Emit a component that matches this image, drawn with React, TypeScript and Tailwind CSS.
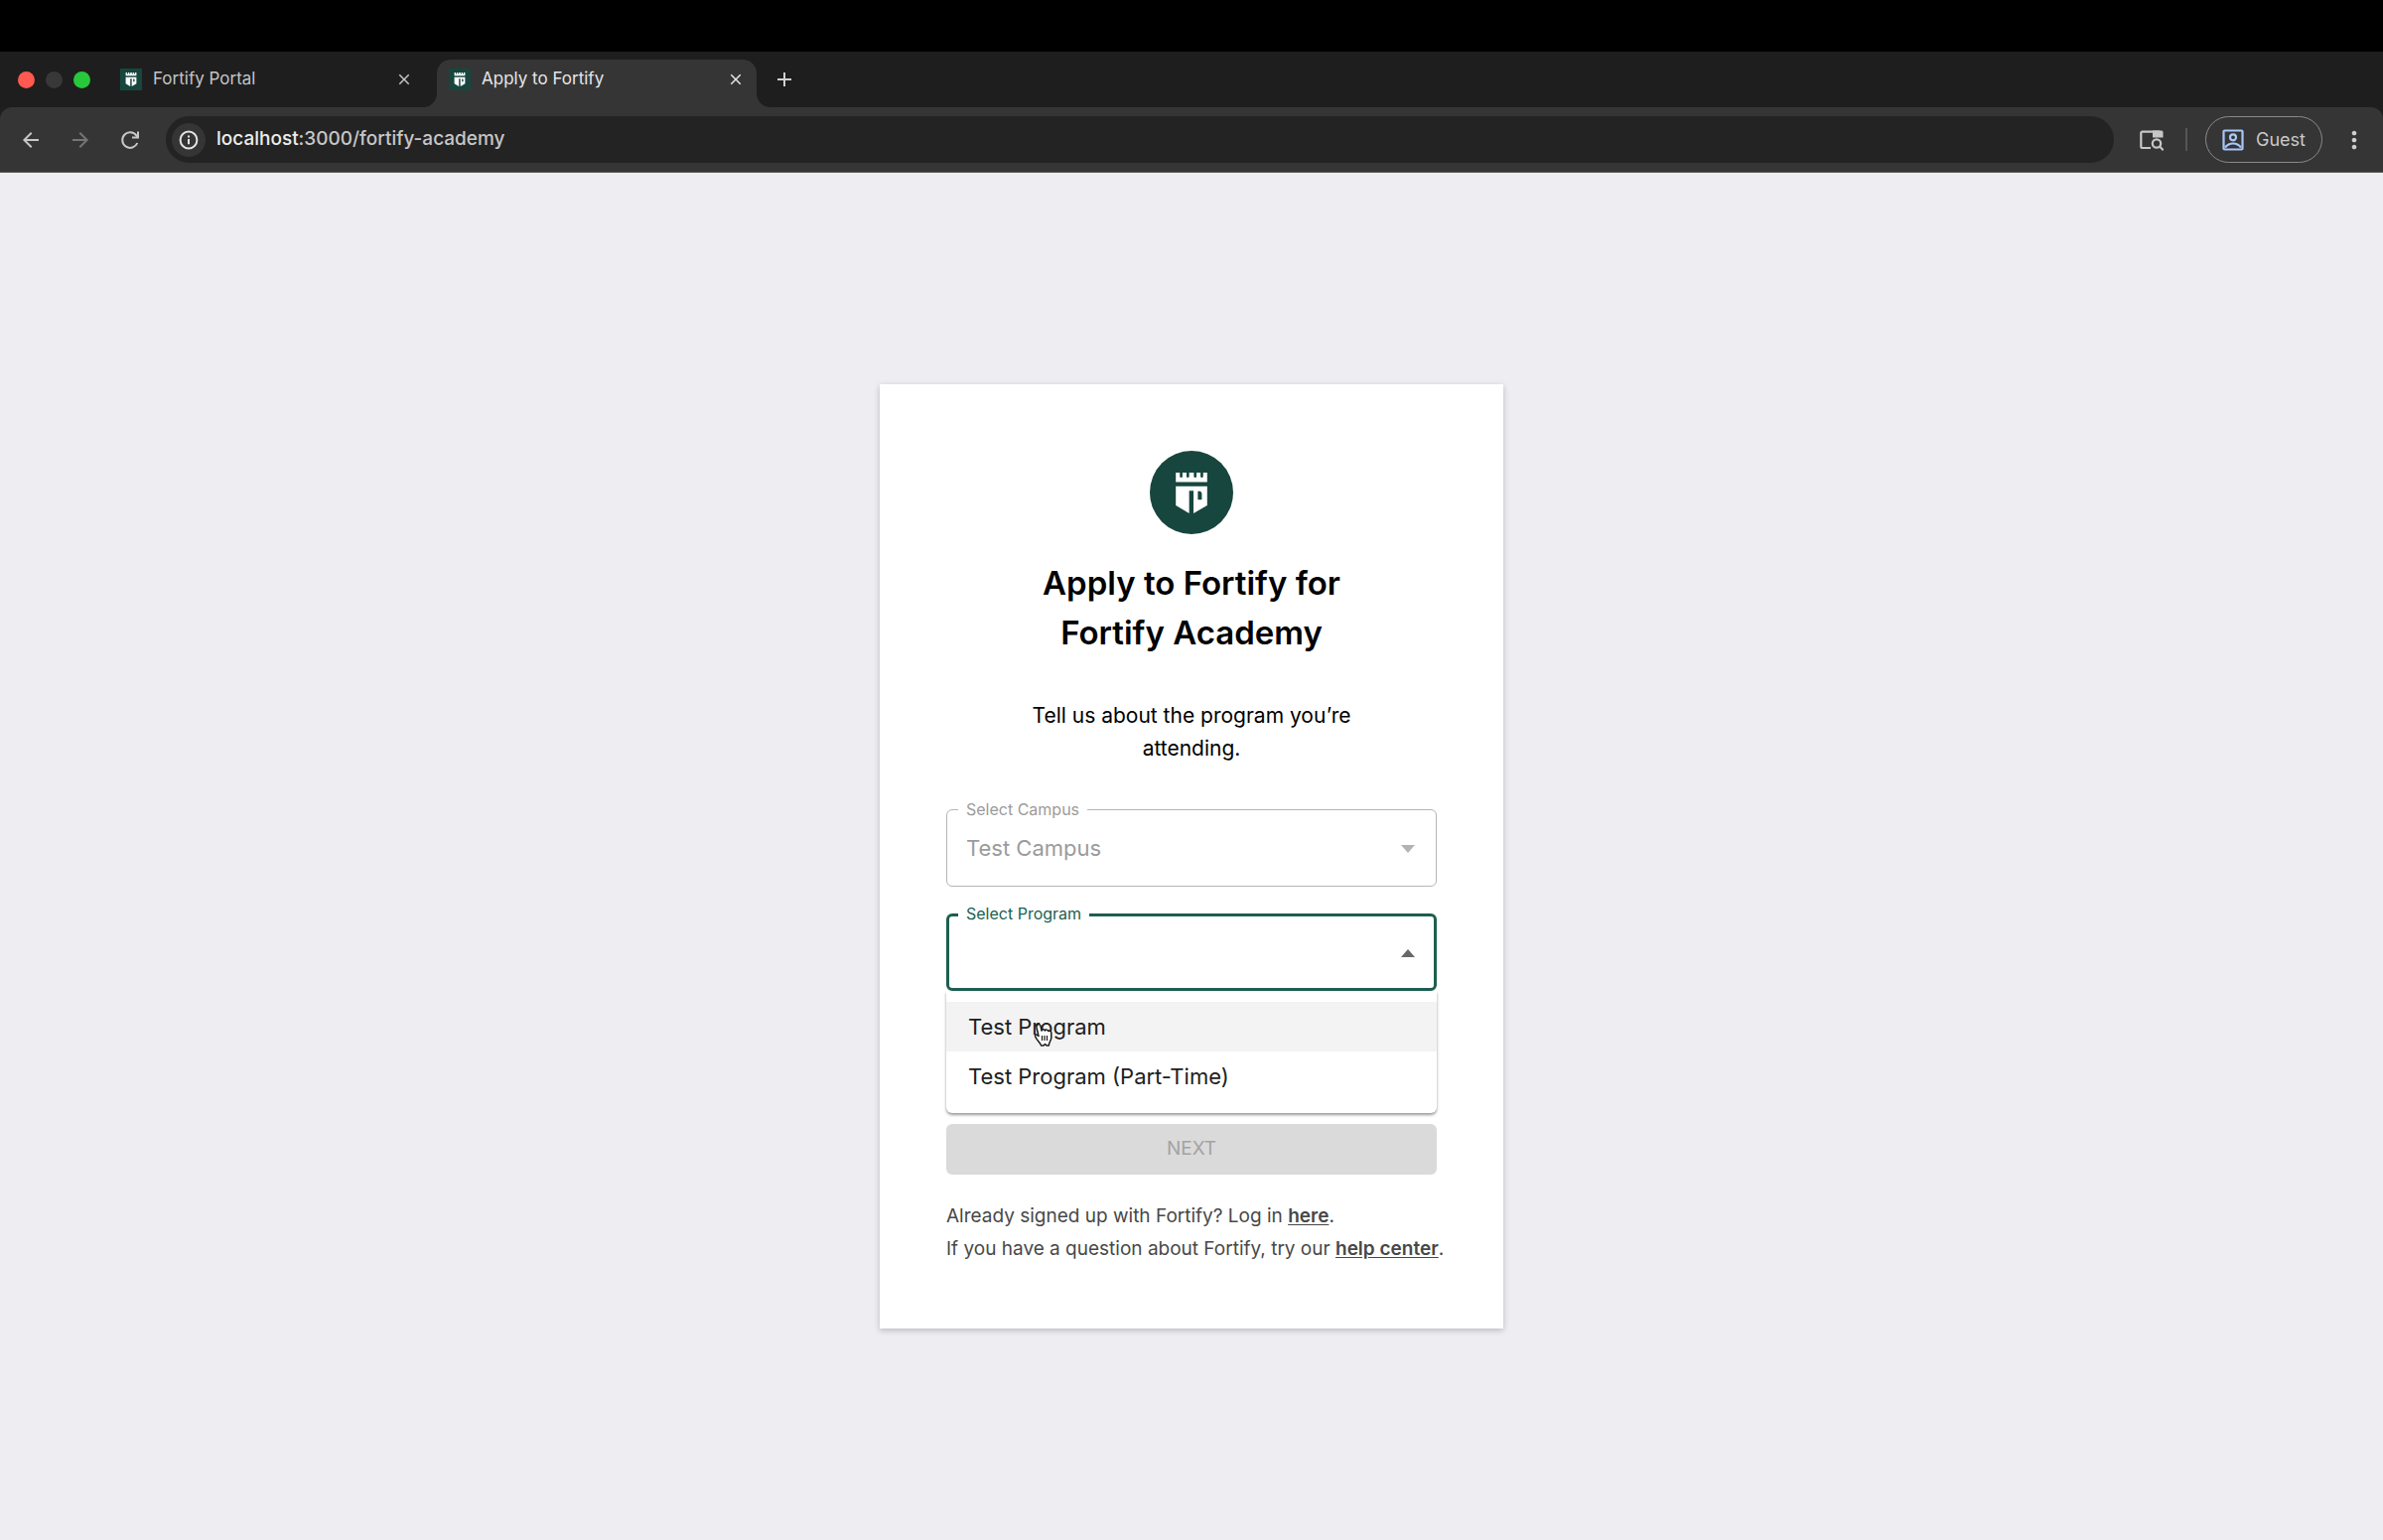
import { useState } from "react";
import { MdAdd, MdArrowBack, MdArrowForward, MdClose, MdMoreVert } from "react-icons/md";
import { clsx } from "clsx";

const tabs = [
  { title: "Fortify Portal", active: false },
  { title: "Apply to Fortify", active: true }
];

const programs = ["Test Program", "Test Program (Part-Time)"];

export default function App() {
  return (
    <div className="flex min-h-screen flex-col bg-[#eeeef2] font-['Inter','Liberation_Sans',sans-serif]">
      <div className="h-[52px] bg-black" />
      <TabStrip />
      <Toolbar />
      <main className="flex flex-1 items-center justify-center">
        <ApplyCard />
      </main>
    </div>
  );
}

function TabStrip() {
  return (
    <header className="flex h-14 items-stretch bg-[#1e1e1e]">
      <div className="flex items-center gap-[11px] px-[18px]">
        <span className="h-[17px] w-[17px] rounded-full bg-[#ff5950]" />
        <span className="h-[17px] w-[17px] rounded-full bg-[#383838]" />
        <span className="h-[17px] w-[17px] rounded-full bg-[#28c83c]" />
      </div>
      <nav className="flex items-end" aria-label="Tabs">
        {tabs.map((tab) => (
          <Tab key={tab.title} title={tab.title} active={tab.active} />
        ))}
      </nav>
      <button type="button" aria-label="New tab" className="ml-4 text-[#d0d0d0]">
        <MdAdd className="h-6 w-6" />
      </button>
    </header>
  );
}

function Tab({ title, active }: { title: string; active: boolean }) {
  return (
    <div
      className={clsx(
        "relative flex h-12 items-center rounded-t-[14px] pb-2 pl-3 text-[17px]",
        active ? "w-[322px] bg-[#353535] pr-3 text-[#e6e6e6]" : "w-[331px] pr-6 text-[#c4c4c4]"
      )}
    >
      {active ? (
        <>
          <TabCurve className="absolute -left-[14px] bottom-0 h-[14px] w-[14px]" />
          <TabCurve className="absolute -right-[14px] bottom-0 h-[14px] w-[14px] -scale-x-100" />
        </>
      ) : null}
      <span className="flex h-[22px] w-[22px] items-center justify-center bg-[#17463e]">
        <CastleMark className="h-[14px] w-[12px]" />
      </span>
      <span className="ml-[11px] flex-1">{title}</span>
      <button type="button" aria-label={`Close ${title}`}>
        <MdClose className="h-[18px] w-[18px]" />
      </button>
    </div>
  );
}

function TabCurve({ className }: { className: string }) {
  return (
    <svg viewBox="0 0 14 14" className={className} aria-hidden="true">
      <path d="M14 0v14H0A14 14 0 0 0 14 0Z" fill="#353535" />
    </svg>
  );
}

function Toolbar() {
  return (
    <div className="bg-[#1e1e1e]">
      <div className="flex h-[66px] items-center gap-[18px] rounded-t-[12px] border-b border-[#5a5a5a] bg-[#353535] px-[15px]">
        <button type="button" aria-label="Back" className="flex w-8 justify-center text-[#c7c7c7]">
          <MdArrowBack className="h-6 w-6" />
        </button>
        <button type="button" aria-label="Forward" className="flex w-8 justify-center text-[#757575]">
          <MdArrowForward className="h-6 w-6" />
        </button>
        <button type="button" aria-label="Reload" className="flex w-8 justify-center text-[#c7c7c7]">
          <ReloadIcon className="h-6 w-6" />
        </button>
        <div className="ml-0.5 flex h-[47px] flex-1 items-center rounded-full bg-[#232323] pl-1.5">
          <button
            type="button"
            aria-label="View site information"
            className="flex h-[34px] w-[34px] items-center justify-center rounded-full bg-[#353535] text-[#e3e3e3]"
          >
            <InfoIcon className="h-5 w-5" />
          </button>
          <a href="#" className="ml-[11px] text-[19px] font-medium text-[#c7c7c7]">
            <span className="text-[#ececec]">localhost</span>:3000/fortify-academy
          </a>
        </div>
        <button type="button" aria-label="Search tabs" className="ml-2 text-[#c7c7c7]">
          <TabSearchIcon className="h-6 w-6" />
        </button>
        <span className="ml-1 h-[23px] w-0.5 bg-[#555555]" />
        <button
          type="button"
          className="flex h-[47px] items-center gap-3 rounded-full border border-[#8a8a8a] px-4 text-[18px] text-[#c9c9c9]"
        >
          <GuestIcon className="h-[22px] w-[22px]" />
          Guest
        </button>
        <button type="button" aria-label="Menu" className="text-[#d0d0d0]">
          <MdMoreVert className="h-7 w-7" />
        </button>
      </div>
    </div>
  );
}

function ApplyCard() {
  return (
    <form
      className="flex w-full max-w-[628px] flex-col bg-white px-[67px] pb-16 pt-[67px] text-black shadow-[0_2px_6px_rgba(0,0,0,0.22)]"
      onSubmit={(event) => event.preventDefault()}
    >
      <div className="flex h-[84px] w-[84px] items-center justify-center self-center rounded-full bg-[#17463e]">
        <CastleMark className="h-[41px] w-[32px]" />
      </div>
      <h1 className="mt-6 text-center text-[33px] font-semibold leading-[50px]">
        Apply to Fortify for
        <br />
        Fortify Academy
      </h1>
      <p className="mt-[42px] text-center text-[21px] leading-[33px]">
        Tell us about the program you’re
        <br />
        attending.
      </p>
      <CampusSelect />
      <ProgramSelect />
      <button
        type="submit"
        disabled
        className="mt-[134px] h-[51px] rounded-[6px] bg-[#dadada] text-[19px] text-[#a3a3a3]"
      >
        NEXT
      </button>
      <div className="mt-[25px] whitespace-nowrap text-[19px] leading-[33px] text-[#484848]">
        <p>
          Already signed up with Fortify? Log in{" "}
          <a href="#" className="font-semibold underline underline-offset-2">
            here
          </a>
          .
        </p>
        <p>
          If you have a question about Fortify, try our{" "}
          <a href="#" className="font-semibold underline underline-offset-2">
            help center
          </a>
          .
        </p>
      </div>
    </form>
  );
}

function CampusSelect() {
  return (
    <div className="relative mt-[45px] text-[#9b9b9b]">
      <label htmlFor="campus" className="absolute -top-3 left-3 bg-white px-2 text-[16px] leading-6">
        Select Campus
      </label>
      <select
        id="campus"
        disabled
        className="h-[78px] w-full appearance-none rounded-[6px] border border-[#b5b5b5] bg-white pl-[19px] text-[22px] opacity-100"
      >
        <option>Test Campus</option>
      </select>
      <Caret className="pointer-events-none absolute right-[22px] top-9 h-2 w-[14px] rotate-180 text-[#b3b3b3]" />
    </div>
  );
}

function ProgramSelect() {
  const [program, setProgram] = useState("");

  return (
    <div className="relative mt-[27px]">
      <label htmlFor="program" className="absolute -top-3 left-3 bg-white px-2 text-[16px] leading-6 text-[#1c5f50]">
        Select Program
      </label>
      <select
        id="program"
        value={program}
        onChange={(event) => setProgram(event.target.value)}
        className="h-[78px] w-full appearance-none rounded-[6px] border-[3px] border-[#1c5f50] bg-white pl-[19px] text-[22px]"
      >
        <option value="" />
        {programs.map((name) => (
          <option key={name}>{name}</option>
        ))}
      </select>
      <Caret className="pointer-events-none absolute right-[22px] top-9 h-2 w-[14px] text-[#686868]" />
      <ul className="absolute inset-x-0 top-full h-[123px] rounded-b-[6px] bg-white pt-[11px] shadow-[0_2px_3px_rgba(0,0,0,0.4)]">
        {programs.map((name, index) => (
          <li key={name}>
            <button
              type="button"
              onClick={() => setProgram(name)}
              className={clsx("h-[50px] w-full pl-[22px] text-left text-[22px] text-[#202020]", index === 0 && "bg-[#f3f3f3]")}
            >
              {name}
            </button>
          </li>
        ))}
      </ul>
      <HandCursor className="pointer-events-none absolute left-[87px] top-[110px] h-[25px] w-[22px]" />
    </div>
  );
}

function Caret({ className }: { className: string }) {
  return (
    <svg viewBox="0 0 14 8" className={className} aria-hidden="true">
      <path d="M0 8 7 0l7 8Z" fill="currentColor" />
    </svg>
  );
}

function CastleMark({ className }: { className: string }) {
  return (
    <svg viewBox="0 0 94 122" className={className} fill="#ffffff" aria-hidden="true">
      <path d="M0 0h12v11q0 4 4 4t4-4V0h12v11q0 4 4 4t4-4V0h14v11q0 4 4 4t4-4V0h12v11q0 4 4 4t4-4V0h12v28H0Z" />
      <path fillRule="evenodd" d="M0 41h94v57L53 122V54H40v68L0 98ZM66 56v25h12V62l-4-6Z" />
    </svg>
  );
}

function ReloadIcon({ className }: { className: string }) {
  return (
    <svg viewBox="0 0 24 24" className={className} fill="none" stroke="currentColor" strokeWidth="2" aria-hidden="true">
      <path d="M19.3 15a7.8 7.8 0 1 1-1-7.6L20 9.5" />
      <path d="M20 3.5v6h-6" />
    </svg>
  );
}

function InfoIcon({ className }: { className: string }) {
  return (
    <svg viewBox="0 0 20 20" className={className} fill="none" stroke="currentColor" strokeWidth="2" aria-hidden="true">
      <circle cx="10" cy="10" r="8.4" />
      <path d="M10 9v5.2M10 5.6v2" />
    </svg>
  );
}

function TabSearchIcon({ className }: { className: string }) {
  return (
    <svg viewBox="0 0 24 24" className={className} fill="none" stroke="currentColor" strokeWidth="2.2" aria-hidden="true">
      <path d="M11 20H2.5A1.2 1.2 0 0 1 1.3 19V4.8a1.2 1.2 0 0 1 1.2-1.2H20" />
      <path d="M13 2.5h9a1.5 1.5 0 0 1 1.500 1.500v5.500H13Z" fill="currentColor" stroke="none" />
      <circle cx="17" cy="15.500" r="4.200" />
      <path d="m20 18.500 3.800 3.800" />
    </svg>
  );
}

function GuestIcon({ className }: { className: string }) {
  return (
    <svg viewBox="0 0 22 22" className={className} fill="none" stroke="#a8c7fa" strokeWidth="2.2" aria-hidden="true">
      <rect x="1.5" y="1.5" width="19" height="19" rx="1" />
      <circle cx="11" cy="8.3" r="3" />
      <path d="M3 18.5c2-2.600 4.800-4 8-4s6 1.400 8 4" />
    </svg>
  );
}

function HandCursor({ className }: { className: string }) {
  return (
    <svg viewBox="0 0 22 25" className={className} fill="#ffffff" stroke="#1a1a1a" strokeWidth="1.5" strokeLinejoin="round" aria-hidden="true">
      <path d="M5 2c1.500-1 2.600 0 3 1.400L9 8c.3-1.600 3-1.800 3.400 0 .6-1.300 3-1.200 3.300.5 1-.9 3 0 3.100 1.700V15c0 3-2.200 4-2.500 8h-2.200l-1.600-1.500L11 23H8.500c-.5-3-4.500-5-6-9.500-.4-1.500.9-2 2-1.200L6 13.500 4 5c-.3-1.200 0-2.400 1-3Z" />
      <path d="M9.500 13v5M12 13v5M14.500 13v5" fill="none" strokeWidth="1.200" />
    </svg>
  );
}
